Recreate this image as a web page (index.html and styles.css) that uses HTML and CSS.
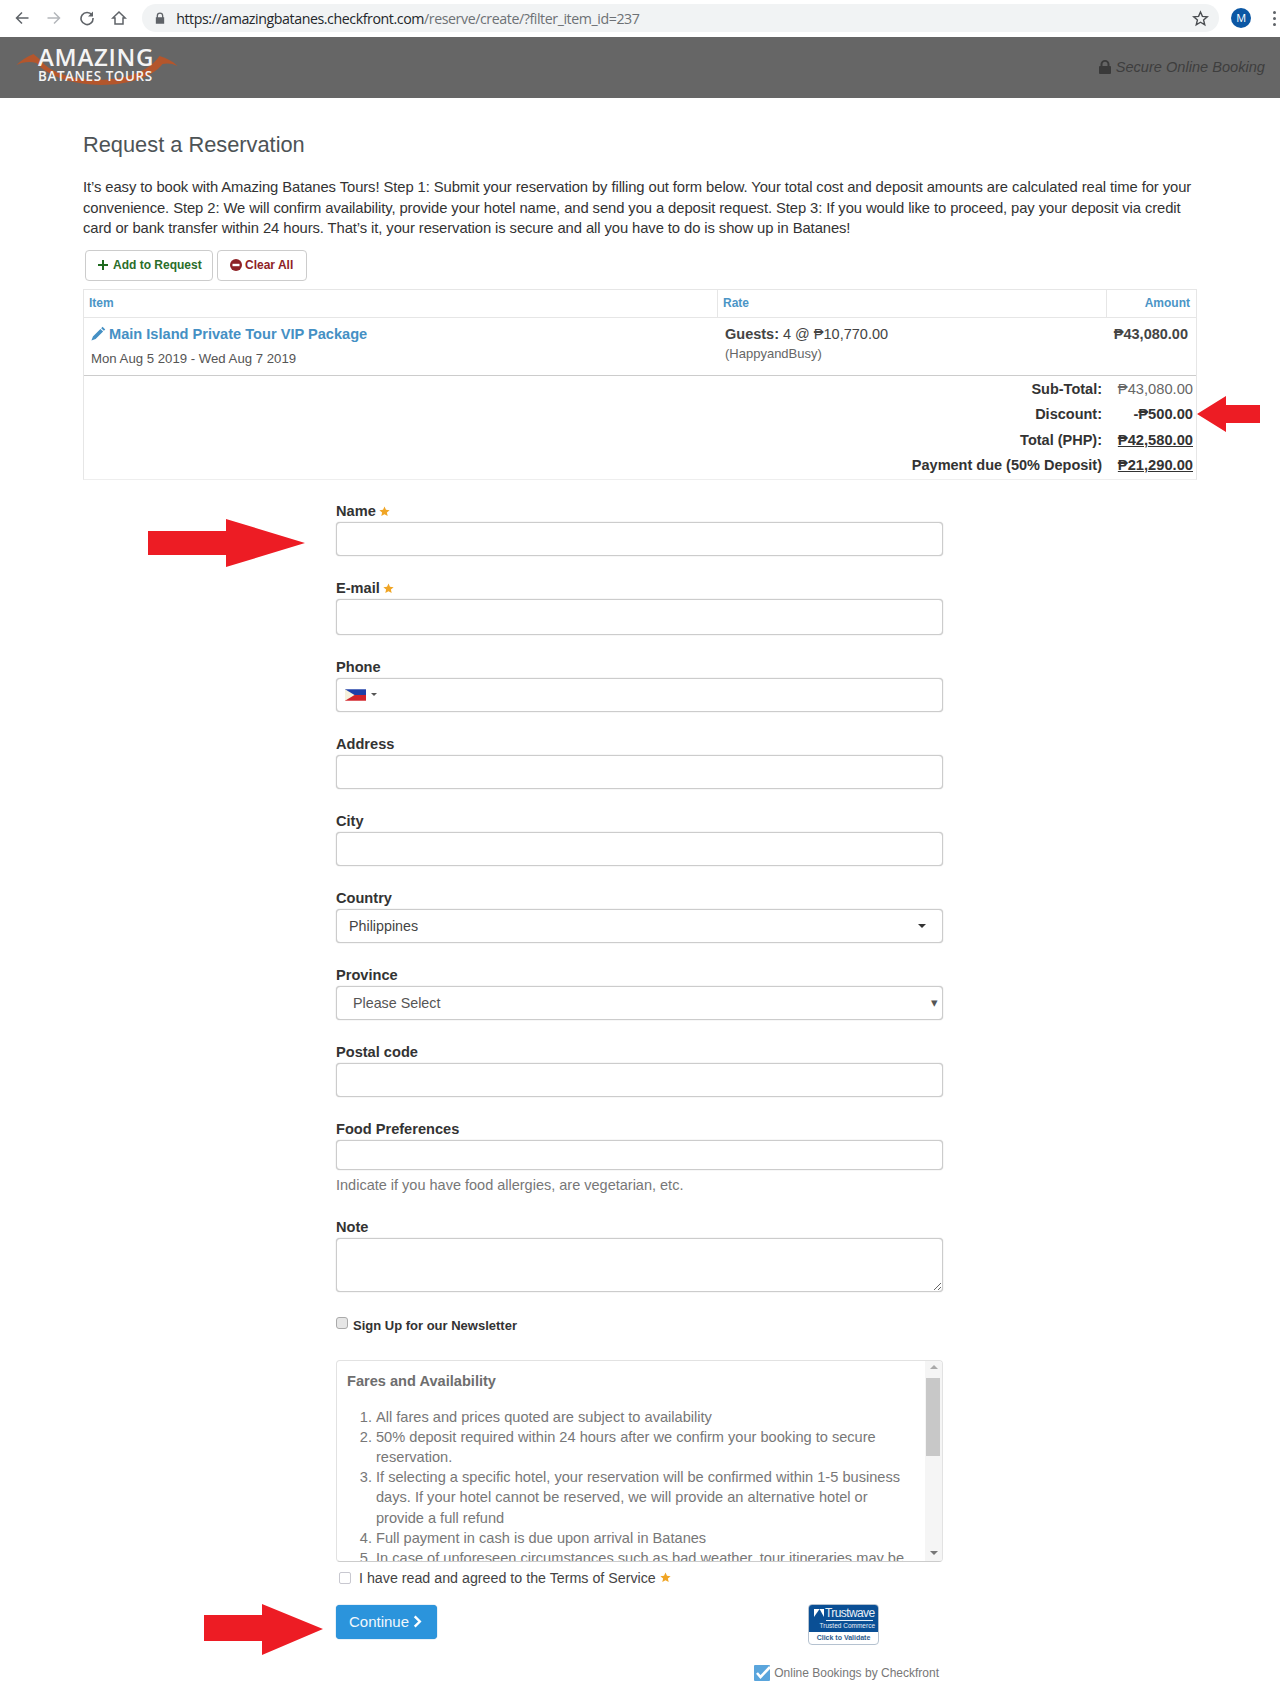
FILE: index.html
```html
<!DOCTYPE html>
<html lang="en">
<head>
<meta charset="utf-8">
<title>Request a Reservation</title>
<link rel="stylesheet" href="styles.css">
</head>
<body>
<div class="chrome">
  <svg class="cicon" viewBox="0 0 16 16"><path d="M14.5 8H2.5M8 2.5 2.5 8 8 13.5" fill="none" stroke="#5f6368" stroke-width="1.5"/></svg>
  <svg class="cicon" viewBox="0 0 16 16"><path d="M1.5 8h12M8 2.5 13.5 8 8 13.5" fill="none" stroke="#b4b7bb" stroke-width="1.5"/></svg>
  <svg class="cicon" viewBox="0 0 16 16"><path d="M13 5.2A6 6 0 1 0 14 8" fill="none" stroke="#5f6368" stroke-width="1.6"/><path d="M14 1.5V6.5H9z" fill="#5f6368"/></svg>
  <svg class="cicon" viewBox="0 0 16 16"><path d="M8 2 1.8 8H4v6h8V8h2.2zM5.5 12.6" fill="none" stroke="#5f6368" stroke-width="1.5"/></svg>
  <div class="omni">
    <svg class="omni-lock" viewBox="0 0 12 14"><path d="M2 6V4.3a4 4 0 0 1 8 0V6h1v8H1V6zm1.6 0h4.8V4.3a2.4 2.4 0 0 0-4.8 0z" fill="#5f6368"/></svg>
    <span class="url"><span class="url-host">https://amazingbatanes.checkfront.com</span>/reserve/create/?filter_item_id=237</span>
    <svg class="omni-star" viewBox="0 0 16 16"><path d="M8 1.8 9.8 6l4.6.4-3.5 3 1.1 4.5L8 11.5l-4 2.4 1.1-4.5-3.5-3L6.200 6z" fill="none" stroke="#4a4d51" stroke-width="1.3"/></svg>
  </div>
  <div class="avatar">M</div>
  <div class="dots"><i></i><i></i><i></i></div>
</div>

<header class="site-head">
  <div class="logo">
    <svg class="swoosh" viewBox="0 0 161 38"><path d="M0 15C5 10 10 7 17 4L24 10C40 34 120 40 143 6 150 8 156 11 161 16 155 13 150 13 146 14 125 42 45 42 20 13 13 11 6 12 0 15Z" fill="#b4562c"/></svg>
    <div class="logo-a">AMAZING</div>
    <div class="logo-b">BATANES TOURS</div>
  </div>
  <div class="secure">
    <svg class="secure-lock" viewBox="0 0 12 14"><path d="M1.500 6V4.300a4.500 4.300 0 0 1 9 0V6h.5a1 1 0 0 1 1 1v6a1 1 0 0 1-1 1H1a1 1 0 0 1-1-1V7a1 1 0 0 1 1-1zm2 0h5V4.300a2.500 2.500 0 0 0-5 0z" fill="#3a3a3a"/></svg>
    <span>Secure Online Booking</span>
  </div>
</header>

<main class="page">
  <h1 class="title">Request a Reservation</h1>
  <p class="intro">It’s easy to book with Amazing Batanes Tours! Step 1: Submit your reservation by filling out form below. Your total cost and deposit amounts are calculated real time for your convenience. Step 2: We will confirm availability, provide your hotel name, and send you a deposit request. Step 3: If you would like to proceed, pay your deposit via credit card or bank transfer within 24 hours. That’s it, your reservation is secure and all you have to do is show up in Batanes!</p>

  <div class="actions">
    <a class="btn btn-add"><svg class="ico-plus" viewBox="0 0 10 10"><path d="M4 0h2v4h4v2H6v4H4V6H0V4h4z" fill="#1f6b1f"/></svg>Add to Request</a>
    <a class="btn btn-clear"><svg class="ico-minus" viewBox="0 0 12 12"><circle cx="6" cy="6" r="6" fill="#8e2226"/><rect x="2.500" y="4.800" width="7" height="2.400" fill="#fff"/></svg>Clear All</a>
  </div>

  <section class="summary">
    <div class="sum-head">
      <div class="c-item">Item</div>
      <div class="c-rate">Rate</div>
      <div class="c-amt">Amount</div>
    </div>
    <div class="sum-row">
      <div class="c-item">
        <div class="tour"><svg class="ico-pencil" viewBox="0 0 14 14"><path d="M10.800.7 13.300 3.200 12 4.500 9.500 2zM8.800 2.700 11.300 5.200 4.300 12.200.4 13.600 1.800 9.700z" fill="#4590c4"/></svg>Main Island Private Tour VIP Package</div>
        <div class="dates">Mon Aug 5 2019 - Wed Aug 7 2019</div>
      </div>
      <div class="c-rate">
        <div class="guests"><b>Guests:</b> 4 @ ₱10,770.00</div>
        <div class="code">(HappyandBusy)</div>
      </div>
      <div class="c-amt amt-val">₱43,080.00</div>
    </div>
    <div class="totals">
      <div class="t-line"><b>Sub-Total:</b><span class="t-val">₱43,080.00</span></div>
      <div class="t-line"><b>Discount:</b><b class="t-val">-₱500.00</b></div>
      <div class="t-line"><b>Total (PHP):</b><b class="t-val u">₱42,580.00</b></div>
      <div class="t-line"><b>Payment due (50% Deposit)</b><b class="t-val u">₱21,290.00</b></div>
    </div>
    <svg class="arrow arrow-discount" viewBox="0 0 63 36"><path d="M0 18 29 0V9H63V27H29V36Z" fill="#ed1c24"/></svg>
  </section>

  <form class="form">
    <div class="field f-name">
      <label class="lbl">Name <svg class="star" viewBox="0 0 12 12"><path d="M6 .5 7.600 4.200 11.600 4.500 8.600 7.100 9.500 11 6 8.900 2.500 11 3.400 7.100.4 4.500 4.400 4.200z"/></svg></label>
      <input class="inp" type="text">
      <svg class="arrow arrow-name" viewBox="0 0 157 48"><path d="M157 24 78 0V12H0V36H78V48Z" fill="#ed1c24"/></svg>
    </div>
    <div class="field f-email">
      <label class="lbl">E-mail <svg class="star" viewBox="0 0 12 12"><path d="M6 .5 7.600 4.200 11.600 4.500 8.600 7.100 9.500 11 6 8.900 2.500 11 3.400 7.100.4 4.500 4.400 4.200z"/></svg></label>
      <input class="inp inp-tall" type="text">
    </div>
    <div class="field">
      <label class="lbl">Phone</label>
      <div class="inp phone">
        <svg class="flag" viewBox="0 0 22 12"><rect width="22" height="6" fill="#1f3fa8"/><rect y="6" width="22" height="6" fill="#d2232a"/><path d="M0 0 10 6 0 12z" fill="#f6f1dc"/></svg>
        <span class="caret caret-sm"></span>
      </div>
    </div>
    <div class="field"><label class="lbl">Address</label><input class="inp" type="text"></div>
    <div class="field"><label class="lbl">City</label><input class="inp" type="text"></div>
    <div class="field">
      <label class="lbl">Country</label>
      <div class="inp sel sel-country"><span>Philippines</span><span class="caret"></span></div>
    </div>
    <div class="field">
      <label class="lbl">Province</label>
      <div class="inp sel sel-province"><span>Please Select</span><span class="tri">▾</span></div>
    </div>
    <div class="field"><label class="lbl">Postal code</label><input class="inp" type="text"></div>
    <div class="field f-food">
      <label class="lbl">Food Preferences</label>
      <input class="inp inp-short" type="text">
      <div class="help">Indicate if you have food allergies, are vegetarian, etc.</div>
    </div>
    <div class="field f-note">
      <label class="lbl">Note</label>
      <textarea class="inp note"></textarea>
    </div>
    <label class="news"><input class="news-box" type="checkbox"><span>Sign Up for our Newsletter</span></label>

    <div class="terms">
      <div class="terms-body">
        <h4 class="terms-title">Fares and Availability</h4>
        <ol class="terms-list">
          <li>All fares and prices quoted are subject to availability</li>
          <li>50% deposit required within 24 hours after we confirm your booking to secure reservation.</li>
          <li>If selecting a specific hotel, your reservation will be confirmed within 1-5 business days. If your hotel cannot be reserved, we will provide an alternative hotel or provide a full refund</li>
          <li>Full payment in cash is due upon arrival in Batanes</li>
          <li>In case of unforeseen circumstances such as bad weather, tour itineraries may be</li>
        </ol>
      </div>
      <div class="scroll">
        <span class="sc-up"></span>
        <span class="sc-thumb"></span>
        <span class="sc-down"></span>
      </div>
    </div>

    <label class="agree"><span class="agree-box"></span><span>I have read and agreed to the Terms of Service</span> <svg class="star" viewBox="0 0 12 12"><path d="M6 .5 7.600 4.200 11.600 4.500 8.600 7.100 9.500 11 6 8.900 2.500 11 3.400 7.100.4 4.500 4.400 4.200z"/></svg></label>

    <div class="submit-row">
      <a class="continue">Continue <svg class="chev" viewBox="0 0 9 14"><path d="M1.500 1.500 7 7 1.500 12.500" fill="none" stroke="#fff" stroke-width="2.600"/></svg></a>
      <svg class="arrow arrow-cont" viewBox="0 0 119 51"><path d="M119 25 58 0V11H0V37H58V51Z" fill="#ed1c24"/></svg>
      <div class="trust">
        <div class="trust-top">
          <div class="trust-name"><svg class="trust-mark" viewBox="0 0 9 7"><path d="M0 0H9V7H0z" fill="#fff"/><path d="M0 7 5 0 9 7z" fill="#0a4f95"/></svg><span>Trustwave</span></div>
          <div class="trust-rule"></div>
          <div class="trust-tc">Trusted Commerce</div>
        </div>
        <div class="trust-bot">Click to Validate</div>
      </div>
    </div>
  </form>

  <div class="powered">
    <svg class="powered-ico" viewBox="0 0 16 16"><rect width="16" height="16" rx="1" fill="#5aa5dc"/><path d="M3 8 6.500 12 16 2" fill="none" stroke="#fff" stroke-width="2.600"/></svg>
    <span>Online Bookings by Checkfront</span>
  </div>
</main>
</body>
</html>
```
FILE: styles.css
```css
* { box-sizing: border-box; }
html, body { margin: 0; padding: 0; }
body {
  background: #fff;
  color: #333;
  font-family: "Liberation Sans", Arial, sans-serif;
  font-size: 15px;
  width: 1280px;
  height: 1693px;
  overflow: hidden;
}

/* browser bar */
.chrome {
  display: flex;
  align-items: center;
  height: 37px;
  padding: 0 0 1px 14px;
  background: #fff;
}
.cicon { width: 16px; height: 16px; margin-right: 16.300px; flex: none; }
.omni {
  display: flex;
  align-items: center;
  flex: none;
  width: 1077px;
  height: 28px;
  margin-left: -1px;
  padding: 0 10px 0 13px;
  border-radius: 14px;
  background: #f1f3f4;
}
.omni-lock { width: 10px; height: 12px; margin-right: 11px; }
.url { flex: 1; font-size: 14.200px; color: #6d7175; font-family: "Open Sans", sans-serif; letter-spacing: -.42px; }
.url-host { color: #24272a; }
.omni-star { width: 17px; height: 17px; }
.avatar {
  width: 20px; height: 20px; margin-left: 12px;
  border-radius: 50%;
  background: #0b57a4; color: #fff;
  font: 11px/20px "Open Sans", sans-serif;
  text-align: center;
}
.dots { display: flex; flex-direction: column; gap: 3px; margin-left: 22px; }
.dots i { width: 3px; height: 3px; border-radius: 50%; background: #5f6368; display: block; }

/* site header */
.site-head {
  display: flex;
  justify-content: space-between;
  align-items: center;
  height: 61px;
  background: #666;
  padding: 0 15px 0 14px;
}
.logo { position: relative; width: 165px; height: 47px; padding: 3px 0 0 24px; color: #f4f4f4; font-family: "Open Sans", sans-serif; }
.swoosh { position: absolute; left: 1px; top: 6px; width: 164px; height: 38px; }
.logo-a { position: relative; font-size: 24px; line-height: 20px; font-weight: 600; letter-spacing: .7px; white-space: nowrap; }
.logo-b { position: relative; margin-top: 2px; font-size: 13.400px; line-height: 14px; font-weight: 600; letter-spacing: .6px; white-space: nowrap; }
.secure { display: flex; align-items: center; gap: 5px; font-style: italic; font-size: 14.600px; color: #3e3e3e; margin-top: -2px; }
.secure-lock { width: 12px; height: 14px; }

/* page */
.page { position: relative; padding: 0 82px 0 83px; }
.title { margin: 35px 0 0; font-size: 21.800px; line-height: 24px; font-weight: 400; color: #4d5356; }
.intro { margin: 20px 0 0; font-size: 14.800px; line-height: 20.500px; color: #333; letter-spacing: -.09px; }
.actions { display: flex; gap: 4px; margin: 11px 0 0 2px; }
.btn {
  display: flex; align-items: center;
  height: 31px;
  padding: 0 12px;
  background: #fff;
  border: 1px solid #ccc;
  border-radius: 4px;
  font-size: 12px;
  font-weight: 700;
  white-space: nowrap;
}
.btn-add { color: #2a6d2a; width: 128px; padding-left: 12px; }
.btn-clear { color: #8e2226; width: 90px; padding-left: 12px; }
.ico-plus { width: 10px; height: 10px; margin-right: 5px; flex: none; }
.ico-minus { width: 12px; height: 12px; margin-right: 3px; flex: none; }

.summary { position: relative; margin-top: 8px; border: 1px solid #e6e6e6; border-bottom-color: #eee; width: 1114px; }
.sum-head { display: flex; height: 28px; align-items: center; border-bottom: 1px solid #e6e6e6; font-size: 12px; font-weight: 700; color: #4b95c6; }
.sum-head .c-item { width: 633px; padding-left: 5px; }
.sum-head .c-rate { width: 390px; padding-left: 5px; height: 100%; display: flex; align-items: center; border-left: 1px solid #e6e6e6; border-right: 1px solid #e6e6e6; }
.sum-head .c-amt { flex: 1; text-align: right; padding-right: 6px; }
.sum-row { display: flex; height: 58px; border-bottom: 1px solid #ccc; padding-top: 7px; }
.sum-row .c-item { width: 635px; padding-left: 7px; }
.sum-row .c-rate { width: 389px; padding-left: 6px; }
.sum-row .c-amt { flex: 1; text-align: right; padding-right: 8px; }
.tour { display: flex; align-items: center; gap: 4px; font-size: 14.600px; line-height: 18px; font-weight: 700; color: #4590c4; }
.ico-pencil { width: 15px; height: 15px; margin-right: -1px; flex: none; }
.dates { margin-top: 8px; font-size: 13.200px; line-height: 16px; color: #555; }
.guests { font-size: 14.500px; line-height: 18px; color: #444; }
.guests b { color: #444; }
.code { margin-top: 3px; font-size: 13px; line-height: 16px; color: #666; }
.amt-val { font-size: 14.500px; line-height: 18px; font-weight: 700; color: #444; }
.totals { padding: 1px 3px 0 0; height: 103px; }
.t-line { display: flex; justify-content: flex-end; height: 25.600px; line-height: 25.600px; font-size: 14.500px; color: #333; }
.t-val { width: 89px; margin-left: 2px; font-size: 14.700px; text-align: right; }
span.t-val { color: #666; }
.u { text-decoration: underline; }

.arrow { position: absolute; }
.arrow-discount { left: 1113px; top: 106px; width: 63px; height: 36px; }

/* form */
.form { width: 607px; margin: 19px 0 0 253px; }
.field { position: relative; margin-bottom: 20px; }
.lbl { display: flex; align-items: center; gap: 3px; height: 23px; padding-top: 2px; font-size: 14.600px; font-weight: 700; color: #333; }
.star { width: 11px; height: 11px; fill: #f0a525; flex: none; }
.inp {
  display: block;
  width: 607px;
  height: 34px;
  padding: 0 12px;
  background: #fff;
  border: 1px solid #ccc;
  border-radius: 4px;
  box-shadow: 0 0 1px #aaa;
  font: 14.300px "Liberation Sans", Arial, sans-serif;
}
.inp-tall { height: 36px; }
.inp-short { height: 30px; }
.arrow-name { left: -188px; top: 20px; width: 157px; height: 48px; }
.phone { display: flex; align-items: center; padding-left: 8px; gap: 5px; }
.flag { width: 21px; height: 12px; }
.caret { display: block; width: 0; height: 0; border: 4px solid transparent; border-top-color: #333; border-bottom: 0; }
.caret-sm { border-width: 3.500px; border-bottom: 0; border-top-color: #555; }
.sel { display: flex; align-items: center; justify-content: space-between; color: #444; }
.sel-country { padding-right: 16px; padding-left: 12px; }
.sel-province { padding-left: 16px; padding-right: 4px; color: #555; }
.tri { font-size: 13px; color: #555; }
.f-food { margin-bottom: 22px; }
.help { margin-top: 7px; font-size: 14.500px; line-height: 16px; color: #777; }
.f-note { margin-bottom: 0; }
.note { height: 54px; resize: both; }
.news { display: flex; align-items: flex-start; gap: 5px; margin-top: 25px; font-size: 13px; font-weight: 700; line-height: 16px; color: #333; }
.news-box { appearance: none; width: 12px; height: 12px; margin: 0; background: #e6e6e6; border: 1px solid #aaa; border-radius: 3px; flex: none; }
.news span { margin-top: 1px; }

.terms { display: flex; height: 202px; margin-top: 26px; border: 1px solid #e2e2e2; border-bottom-color: #ccc; border-radius: 4px; overflow: hidden; }
.terms-body { flex: 1; overflow: hidden; padding: 11px 15px 0 10px; color: #777; font-size: 14.600px; line-height: 20.200px; }
.terms-title { margin: 0 0 17px; font-size: 14.600px; line-height: 18px; color: #6e6e6e; font-weight: 700; }
.terms-list { margin: 0; padding-left: 29px; }
.scroll { position: relative; width: 17px; background: #f5f5f5; flex: none; }
.sc-up, .sc-down { position: absolute; left: 5px; width: 0; height: 0; border: 4px solid transparent; }
.sc-up { top: 4px; border-bottom-color: #aaa; border-top: 0; }
.sc-down { bottom: 6px; border-top-color: #777; border-bottom: 0; }
.sc-thumb { position: absolute; left: 1px; top: 17px; width: 14px; height: 78px; background: #c8c8c8; }

.agree { display: flex; align-items: center; gap: 4px; height: 18px; margin-top: 7px; padding-left: 3px; font-size: 14.250px; color: #444; }
.agree-box { width: 12px; height: 12px; margin-right: 4px; border: 1px solid #c8c8d0; border-radius: 2px; background: #fff; }

.submit-row { position: relative; height: 48px; margin-top: 18px; }
.continue {
  display: inline-flex; align-items: center; gap: 4px;
  width: 101px; height: 34px;
  padding: 0 0 1px 13px;
  background: #2b94dc;
  border-radius: 4px;
  box-shadow: 0 0 1px #1d74b5;
  color: #f2f8fc;
  font-size: 15px;
}
.chev { width: 9px; height: 13px; }
.arrow-cont { left: -132px; top: -1px; width: 119px; height: 51px; }
.trust {
  position: absolute; left: 472px; top: -1px;
  width: 71px; height: 41px;
  border: 1px solid #b5c2d0; border-radius: 4px;
  overflow: hidden;
  background: #fff;
  font-family: "Liberation Sans", Arial, sans-serif;
}
.trust-top { height: 27px; background: #0a4f95; color: #e9f0f7; padding: 3px 3px 0 5px; }
.trust-name { display: flex; align-items: center; gap: 1px; font-size: 12px; line-height: 10px; letter-spacing: -.6px; white-space: nowrap; }
.trust-mark { width: 10px; height: 8px; flex: none; }
.trust-rule { height: 1px; background: #e9f0f7; margin: 2px 2px 0 12px; }
.trust-tc { font-size: 6.500px; line-height: 8px; text-align: right; white-space: nowrap; margin-top: 1px; }
.trust-bot { font-size: 7px; font-weight: 700; line-height: 12px; text-align: center; color: #2c5a8c; white-space: nowrap; }

.powered { display: flex; justify-content: flex-end; align-items: center; gap: 4px; width: 856px; margin-top: 12px; font-size: 12px; color: #777; }
.powered-ico { width: 16px; height: 16px; }
```
